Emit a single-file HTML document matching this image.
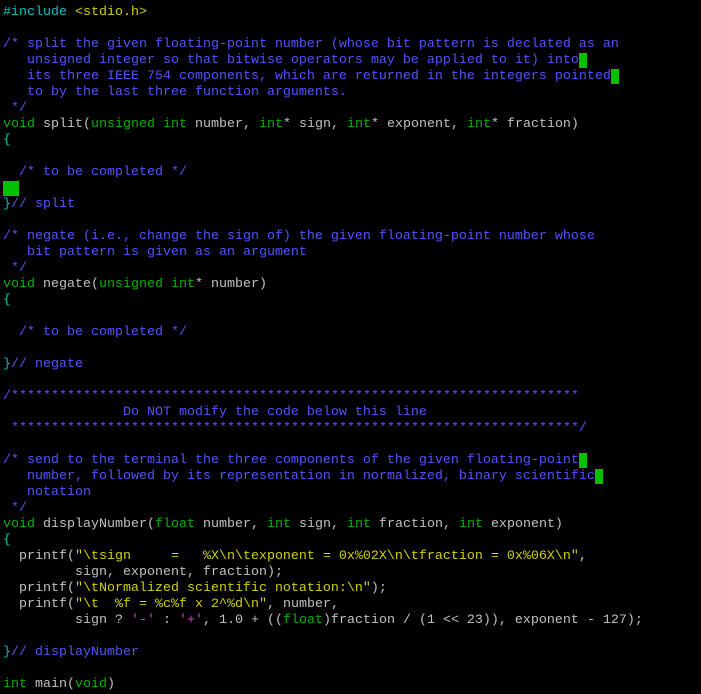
<!DOCTYPE html>
<html><head><meta charset="utf-8"><style>
html,body{margin:0;background:#000;width:701px;height:694px;overflow:hidden}
pre{margin:0;padding:5px 0 0 3px;font-family:"Liberation Mono",monospace;font-size:13.33px;line-height:16px;color:#c0c0c0;white-space:pre}
.c{color:#5252ff}.t{color:#00b000}.p{color:#00c0c0}.s{color:#d0d000}.m{color:#e030e0}.b{color:#00c0c0}
.k{background:#00c000}
</style></head><body><pre><span class="p">#include</span> <span class="s">&lt;stdio.h&gt;</span>

<span class="c">/* split the given floating-point number (whose bit pattern is declated as an
   unsigned integer so that bitwise operators may be applied to it) into</span><span class="k"> </span>
<span class="c">   its three IEEE 754 components, which are returned in the integers pointed</span><span class="k"> </span>
<span class="c">   to by the last three function arguments.
 */</span>
<span class="t">void</span> split(<span class="t">unsigned int</span> number, <span class="t">int</span>* sign, <span class="t">int</span>* exponent, <span class="t">int</span>* fraction)
<span class="b">{</span>

  <span class="c">/* to be completed */</span>
<span class="k">  </span>
<span class="b">}</span><span class="c">// split</span>

<span class="c">/* negate (i.e., change the sign of) the given floating-point number whose
   bit pattern is given as an argument
 */</span>
<span class="t">void</span> negate(<span class="t">unsigned int</span>* number)
<span class="b">{</span>

  <span class="c">/* to be completed */</span>

<span class="b">}</span><span class="c">// negate</span>

<span class="c">/***********************************************************************
               Do NOT modify the code below this line
 ***********************************************************************/</span>

<span class="c">/* send to the terminal the three components of the given floating-point</span><span class="k"> </span>
<span class="c">   number, followed by its representation in normalized, binary scientific</span><span class="k"> </span>
<span class="c">   notation
 */</span>
<span class="t">void</span> displayNumber(<span class="t">float</span> number, <span class="t">int</span> sign, <span class="t">int</span> fraction, <span class="t">int</span> exponent)
<span class="b">{</span>
  printf(<span class="s">"\tsign     =   %X\n\texponent = 0x%02X\n\tfraction = 0x%06X\n"</span>,
         sign, exponent, fraction);
  printf(<span class="s">"\tNormalized scientific notation:\n"</span>);
  printf(<span class="s">"\t  %f = %c%f x 2^%d\n"</span>, number,
         sign ? <span class="m">'-'</span> : <span class="m">'+'</span>, 1.0 + ((<span class="t">float</span>)fraction / (1 &lt;&lt; 23)), exponent - 127);

<span class="b">}</span><span class="c">// displayNumber</span>

<span class="t">int</span> main(<span class="t">void</span>)
</pre></body></html>
